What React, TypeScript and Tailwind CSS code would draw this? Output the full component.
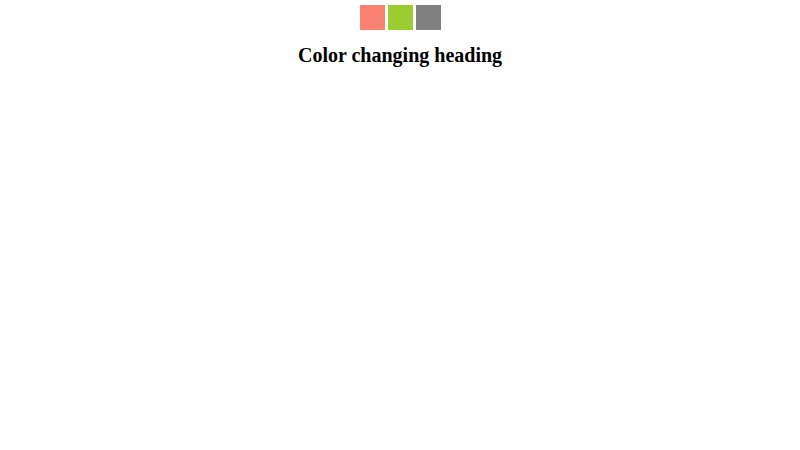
import React, { useState } from "react";

export default function App() {
  const [color, setColor] = useState("black");

  return (
    <div className="min-h-screen w-full bg-white px-2 pt-[5px] text-center font-['Liberation_Serif',serif]">
      {/* Color boxes */}
      <div className="flex justify-center gap-[3px]">
        <button
          type="button"
          aria-label="salmon"
          onClick={() => setColor("salmon")}
          className="h-[25px] w-[25px] cursor-pointer bg-[#fa8072]"
        />
        <button
          type="button"
          aria-label="yellowgreen"
          onClick={() => setColor("yellowgreen")}
          className="h-[25px] w-[25px] cursor-pointer bg-[#9acd32]"
        />
        <button
          type="button"
          aria-label="gray"
          onClick={() => setColor("gray")}
          className="h-[25px] w-[25px] cursor-pointer bg-[#808080]"
        />
      </div>

      {/* Heading */}
      <h1 className="mt-[13px] text-[20px] leading-6 font-bold" style={{ color }}>
        Color changing heading
      </h1>
    </div>
  );
}
